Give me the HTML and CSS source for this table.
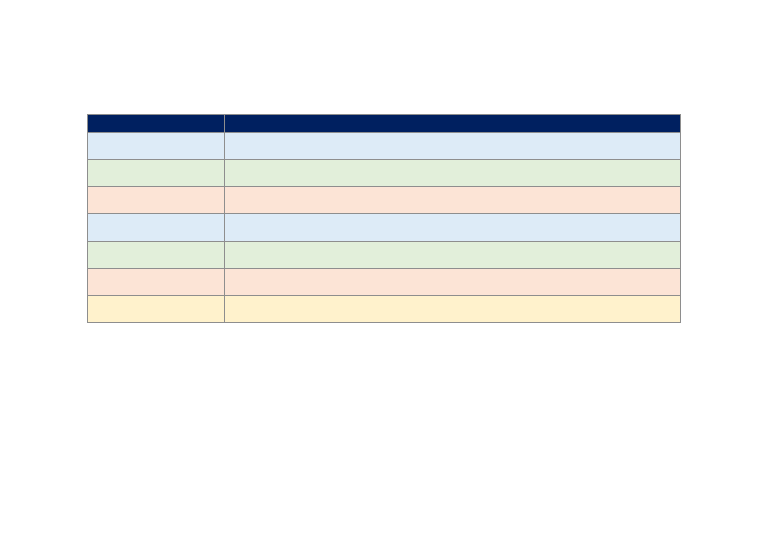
FILE: index.html
```html
<!DOCTYPE html>
<html>
<head>
<meta charset="utf-8">
<link rel="stylesheet" href="styles.css">
</head>
<body>
<div class="page">
  <table class="grid">
    <tr class="head"><td class="c1"></td><td class="c2"></td></tr>
    <tr class="blue"><td></td><td></td></tr>
    <tr class="green"><td></td><td></td></tr>
    <tr class="orange"><td></td><td></td></tr>
    <tr class="blue"><td></td><td></td></tr>
    <tr class="green"><td></td><td></td></tr>
    <tr class="orange"><td></td><td></td></tr>
    <tr class="yellow"><td></td><td></td></tr>
  </table>
</div>
</body>
</html>
```
FILE: styles.css
```css
html, body {
  margin: 0;
  padding: 0;
  background: #ffffff;
  font-family: "Liberation Sans", Arial, sans-serif;
}
.page {
  padding: 114px 0 0 87px;
}
.grid {
  border-collapse: collapse;
  width: 594px;
  table-layout: fixed;
}
.grid td {
  border: 1px solid #8e8e8e;
  height: 26.25px;
  padding: 0;
}
.grid .c1 {
  width: 136px;
}
.head td {
  height: 16.5px;
  background: #002060;
}
.blue td { background: #ddebf7; }
.green td { background: #e2efda; }
.orange td { background: #fce4d6; }
.yellow td { background: #fff2cc; }
```
